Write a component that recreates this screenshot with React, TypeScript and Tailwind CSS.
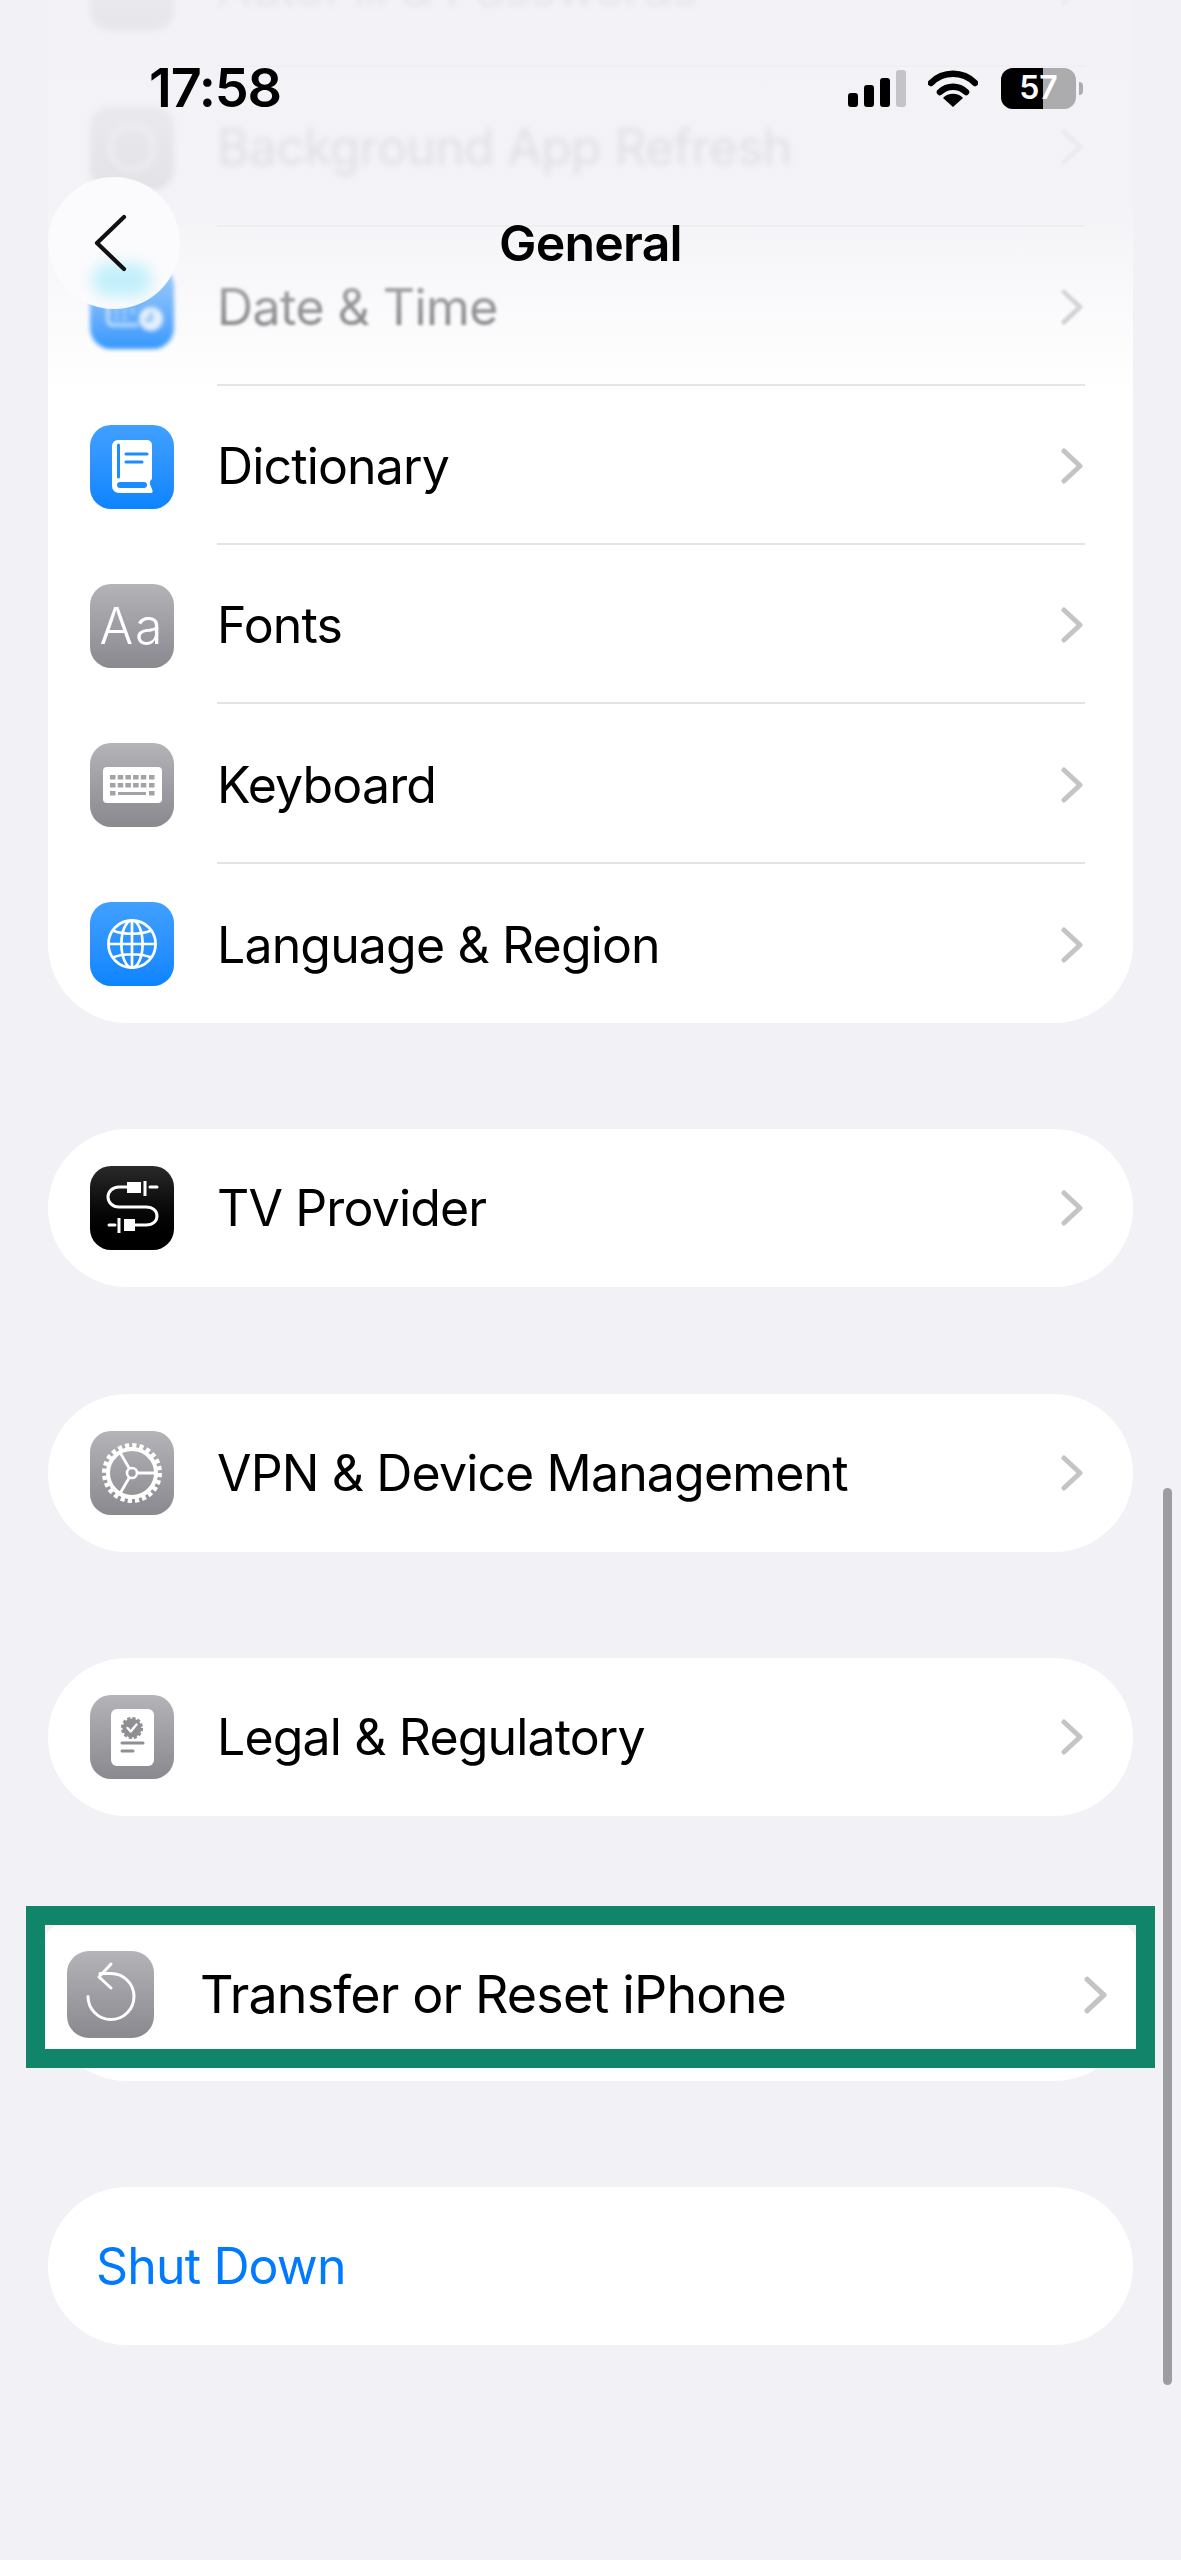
const FONT = "font-['Inter','Liberation_Sans',sans-serif]";

function Chevron({ large = false }: { large?: boolean }) {
  return (
    <svg width={large ? 23 : 22} height={large ? 38 : 36} viewBox="0 0 22 36" fill="none" className="shrink-0">
      <path d="M3 3l16 15L3 33" stroke="#c4c4c7" strokeWidth="5" strokeLinecap="round" strokeLinejoin="round" />
    </svg>
  );
}

function IconBox({ tone, large = false, children }: { tone: 'blue' | 'gray' | 'black'; large?: boolean; children?: React.ReactNode }) {
  const bg =
    tone === 'blue'
      ? 'bg-gradient-to-b from-[#40a0ff] to-[#0a84ff]'
      : tone === 'gray'
        ? 'bg-gradient-to-b from-[#b3b3b8] to-[#89898f]'
        : 'bg-gradient-to-b from-[#2a2a2a] to-black';
  const size = large ? 'h-[87px] w-[87px] rounded-[22px]' : 'h-[84px] w-[84px] rounded-[21px]';
  return <div className={`flex shrink-0 items-center justify-center ${size} ${bg}`}>{children}</div>;
}

const BookIcon = (
  <svg width="41" height="53" viewBox="0 0 41 53">
    <path
      d="M6 0h29a5 5 0 0 1 5 5v33c0 1-.7 2-1.5 2.5-.8.7-.8 3.5 0 5l2 5c.4 1-.2 2.5-1.5 2.5H7a7 7 0 0 1-7-7V6a6 6 0 0 1 6-6z"
      fill="white"
    />
    <path d="M6.5 5v32" stroke="#1c8dff" strokeWidth="3" strokeLinecap="round" />
    <path d="M14 14h21M14 22h16" stroke="#1c8dff" strokeWidth="3" strokeLinecap="round" />
    <rect x="5" y="42" width="30" height="6" rx="3" fill="#1c8dff" />
  </svg>
);

const KeyboardIcon = (
  <svg width="59" height="36" viewBox="0 0 59 36">
    <rect width="59" height="36" rx="4" fill="white" />
    {[7, 14.7, 22.4, 30.1, 37.8, 46].map((x) => (
      <rect key={x} x={x} y="8" width="5.5" height="4.5" fill="#a2a2a7" />
    ))}
    {[7, 14.7, 22.4, 30.1, 37.8, 46].map((x) => (
      <rect key={x} x={x} y="16" width="5.5" height="4.5" fill="#a2a2a7" />
    ))}
    <rect x="7" y="24" width="5.5" height="4.5" fill="#a2a2a7" />
    <rect x="15" y="25" width="28" height="3" fill="#a2a2a7" />
    <rect x="46" y="24" width="5.5" height="4.5" fill="#a2a2a7" />
  </svg>
);

const GlobeIcon = (
  <svg width="52" height="52" viewBox="0 0 54 54" fill="none" stroke="white" strokeWidth="2.8">
    <circle cx="27" cy="27" r="24.5" />
    <ellipse cx="27" cy="27" rx="11" ry="24.5" />
    <path d="M27 2.5v49M2.5 27h49M7 13c11 4.5 29 4.5 40 0M7 41c11-4.5 29-4.5 40 0" />
  </svg>
);

const CableIcon = (
  <svg width="84" height="84" viewBox="0 0 84 84" fill="none" stroke="white" strokeWidth="3">
    <path d="M37 21H29C22 21 18 26 18 31s4 10 11 10h27c7 0 11 4 11 9s-4 9-11 9H45" />
    <rect x="37" y="16" width="14" height="11" fill="white" stroke="none" />
    <path d="M55 15v15" />
    <path d="M60 21h7" strokeLinecap="round" />
    <rect x="34" y="53" width="11" height="12" fill="white" stroke="none" />
    <path d="M29 52v15" />
    <path d="M19 59h6" strokeLinecap="round" />
  </svg>
);

const GearIcon = (
  <svg width="62" height="62" viewBox="0 0 62 62" fill="none" stroke="white">
    <circle cx="31" cy="31" r="24" strokeWidth="4" />
    <circle cx="31" cy="31" r="27.5" strokeWidth="5" strokeDasharray="4.2 3" />
    <circle cx="31" cy="31" r="5" strokeWidth="2.6" />
    <path d="M36 31h19M28.5 26.7L19 10.5M28.5 35.3L19 51.5" strokeWidth="2.8" />
  </svg>
);

const LegalIcon = (
  <svg width="43" height="57" viewBox="0 0 43 57">
    <rect width="43" height="57" rx="6" fill="white" />
    <circle cx="21" cy="19" r="9.5" fill="#8e8e93" />
    <circle cx="21" cy="19" r="10" fill="none" stroke="#8e8e93" strokeWidth="2.2" strokeDasharray="3.2 2.04" />
    <path d="M16.5 19l3.2 3.5 5.8-7" fill="none" stroke="white" strokeWidth="2.4" strokeLinecap="round" strokeLinejoin="round" />
    <path d="M11 34h21M11 42h11" stroke="#8e8e93" strokeWidth="3" strokeLinecap="round" />
  </svg>
);

const ResetIcon = (
  <svg width="87" height="87" viewBox="0 0 87 87" fill="none" stroke="white" strokeWidth="3" strokeLinecap="round" strokeLinejoin="round">
    <path d="M21 45.5a23 23 0 1 0 23-23H33" />
    <path d="M44 13 32 26l12 11" />
  </svg>
);

const ClockCalendarIcon = (
  <svg width="84" height="84" viewBox="0 0 84 84" fill="none">
    <path d="M18 30v26a4 4 0 0 0 4 4h26" stroke="white" strokeOpacity="0.8" strokeWidth="3" />
    <path d="M25 46h3M33 46h3M41 46h3M25 53h3M33 53h3" stroke="white" strokeOpacity="0.8" strokeWidth="3" />
    <circle cx="61" cy="54" r="12" fill="white" fillOpacity="0.85" />
    <path d="M61 47v8h-6" stroke="#3a9cf2" strokeWidth="2.5" />
  </svg>
);

const RingIcon = (
  <svg width="60" height="60" viewBox="0 0 60 60" fill="none">
    <circle cx="30" cy="30" r="22" stroke="white" strokeOpacity="0.7" strokeWidth="4" />
  </svg>
);

function Row({
  icon,
  label,
  divider = false,
  blur = 'none',
}: {
  icon: React.ReactNode;
  label: string;
  divider?: boolean;
  blur?: 'none' | 'soft' | 'heavy';
}) {
  const textClass =
    blur === 'heavy'
      ? 'tracking-[-0.7px] text-[#727275] blur-[3px]'
      : blur === 'soft'
        ? 'tracking-[-0.55px] text-[#5f5f62] blur-[1.5px]'
        : 'tracking-[-0.85px] text-black';
  return (
    <div className="flex h-[159.3px] items-center pl-[42px] pr-[48px]">
      <div className={`mt-[2px] ${blur === 'none' ? '' : blur === 'soft' ? 'blur-[2px]' : 'blur-[3px]'}`}>{icon}</div>
      <div className={`ml-[43px] flex h-full flex-1 items-center justify-between pr-[2px] pt-[3px] ${divider ? 'border-b-2 border-[#e4e4e6]' : ''}`}>
        <span className={`text-[50px] leading-none ${textClass}`}>{label}</span>
        <div className={blur === 'none' ? '' : 'blur-[1px]'}>
          <Chevron />
        </div>
      </div>
    </div>
  );
}

function SingleCard({ icon, label }: { icon: React.ReactNode; label: string }) {
  return (
    <div className="flex h-[158px] items-center rounded-[79px] bg-white pl-[42px] pr-[50px]">
      {icon}
      <span className="ml-[43px] flex-1 text-[50px] leading-none tracking-[-0.85px] text-black">{label}</span>
      <Chevron />
    </div>
  );
}

export default function App() {
  return (
    <div className={`relative h-[2560px] w-[1181px] overflow-hidden bg-[#f1f1f6] ${FONT}`}>
      {/* scrolled list */}
      <div className="-mt-[92px] flex flex-col gap-[106.4px] px-[48px]">
        <div className="rounded-b-[79px] bg-white">
          <Row blur="heavy" divider label="AutoFill & Passwords" icon={<IconBox tone="gray" />} />
          <Row blur="heavy" divider label="Background App Refresh" icon={<IconBox tone="gray">{RingIcon}</IconBox>} />
          <Row blur="soft" divider label="Date & Time" icon={<IconBox tone="blue">{ClockCalendarIcon}</IconBox>} />
          <Row divider label="Dictionary" icon={<IconBox tone="blue">{BookIcon}</IconBox>} />
          <Row
            divider
            label="Fonts"
            icon={
              <IconBox tone="gray">
                <span className="text-[50px] font-light leading-none tracking-[2px] text-white">Aa</span>
              </IconBox>
            }
          />
          <Row divider label="Keyboard" icon={<IconBox tone="gray">{KeyboardIcon}</IconBox>} />
          <Row label="Language & Region" icon={<IconBox tone="blue">{GlobeIcon}</IconBox>} />
        </div>
        <SingleCard label="TV Provider" icon={<IconBox tone="black">{CableIcon}</IconBox>} />
        <SingleCard label="VPN & Device Management" icon={<IconBox tone="gray">{GearIcon}</IconBox>} />
        <SingleCard label="Legal & Regulatory" icon={<IconBox tone="gray">{LegalIcon}</IconBox>} />
        <div className="h-[158px] rounded-[79px] bg-white" />
        <div className="flex h-[158px] items-center rounded-[79px] bg-white pl-[48px]">
          <span className="text-[50px] leading-none tracking-[-0.85px] text-[#007aff]">Shut Down</span>
        </div>
      </div>

      {/* fade under the nav bar */}
      <div className="absolute inset-x-0 top-0 h-[390px] bg-gradient-to-b from-[#f1f1f6]/90 via-[#f1f1f6]/85 to-transparent" />

      {/* status bar */}
      <div className="absolute inset-x-0 top-[62px] flex h-[52px] items-center justify-between pl-[149px] pr-[98px]">
        <span className="text-[54px] font-semibold leading-none tracking-[-1.2px] text-black">17:58</span>
        <div className="flex items-center">
          <svg width="58" height="37" viewBox="0 0 58 37">
            <rect x="0" y="23" width="10" height="14" rx="3" fill="black" />
            <rect x="16" y="15" width="10" height="22" rx="3" fill="black" />
            <rect x="32" y="8" width="10" height="29" rx="3" fill="black" />
            <rect x="48" y="0" width="10" height="37" rx="3" fill="#c4c4c8" />
          </svg>
          <svg width="50" height="37" viewBox="0 0 50 37" className="ml-[22px]" fill="none">
            <path d="M3 13a31 31 0 0 1 44 0" stroke="black" strokeWidth="6.5" strokeLinecap="round" />
            <path d="M12 22a19 19 0 0 1 26 0" stroke="black" strokeWidth="6.5" strokeLinecap="round" />
            <path d="M25 37l-10-9a14 14 0 0 1 20 0z" fill="black" />
          </svg>
          <div className="relative ml-[23px] flex h-[41px] w-[75px] items-center justify-center overflow-hidden rounded-[12px] bg-[#acacae]">
            <div className="absolute inset-y-0 left-0 w-[42px] bg-black" />
            <span className="relative text-[32px] font-semibold leading-none text-white">57</span>
          </div>
          <div className="ml-[3px] h-[13px] w-[4px] rounded-r-full bg-[#acacae]" />
        </div>
      </div>

      {/* nav bar */}
      <div className="absolute left-[48px] top-[177px] flex h-[132px] w-[132px] items-center overflow-hidden rounded-full bg-[#fbfbfd]">
        <div className="absolute bottom-[12px] left-[44px] h-[34px] w-[60px] rounded-full bg-[#c4f0fb] blur-[7px]" />
        <svg width="34" height="58" viewBox="0 0 34 58" fill="none" className="relative ml-[45px]">
          <path d="M31 3 4 29l27 26" stroke="#111" strokeWidth="4.2" strokeLinecap="round" strokeLinejoin="round" />
        </svg>
      </div>
      <div className="absolute inset-x-0 top-[218px] text-center text-[50px] font-semibold leading-none tracking-[-0.8px] text-black">General</div>

      {/* scrollbar */}
      <div className="absolute left-[1163px] top-[1488px] h-[897px] w-[9px] rounded-full bg-[#9d9da0]" />

      {/* highlight box */}
      <div className="absolute left-[26px] top-[1906px] h-[162px] w-[1129px] border-[19px] border-[#108569] bg-[#f1f1f6]">
        <div className="flex h-full items-center rounded-t-[16px] bg-white pl-[22px] pr-[29px] pt-[15px]">
          <IconBox tone="gray" large>
            {ResetIcon}
          </IconBox>
          <span className="ml-[46px] flex-1 text-[52px] leading-none tracking-[-0.85px] text-black">Transfer or Reset iPhone</span>
          <Chevron large />
        </div>
      </div>
    </div>
  );
}
